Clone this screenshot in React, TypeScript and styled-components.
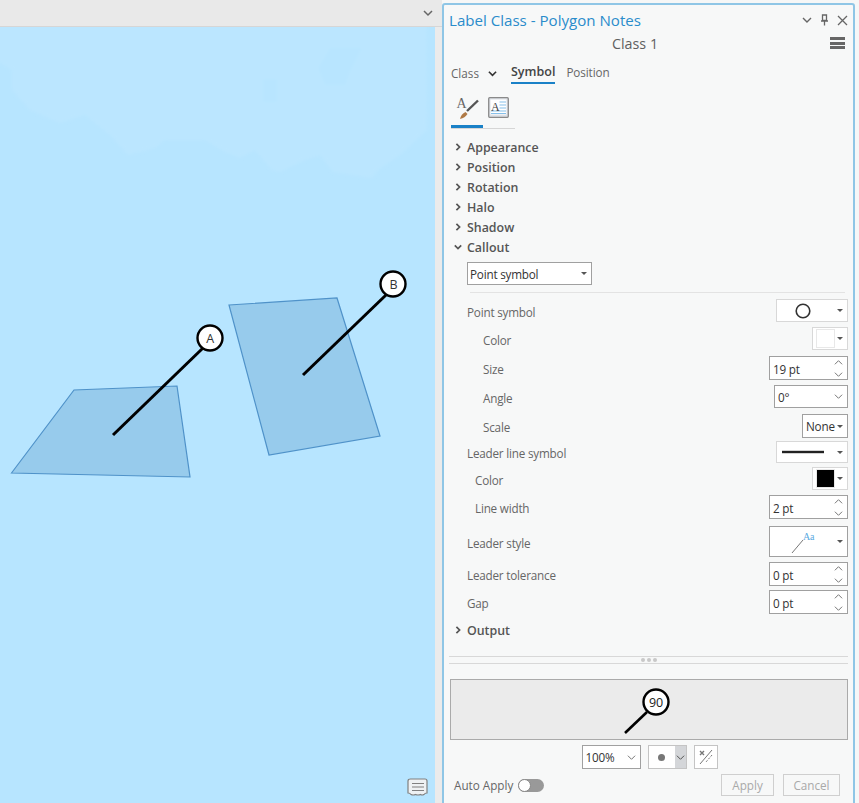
import React from "react";
import styled, { createGlobalStyle } from "styled-components";

const GlobalStyle = createGlobalStyle`
	html, body {
		margin: 0;
		padding: 0;
		height: 100%;
		background: #f6f7f7;
	}
	body {
		font-family: "Open Sans", "Noto Sans", sans-serif;
		font-size: 11.7px;
		letter-spacing: -0.2px;
		color: #555;
		overflow: hidden;
	}
`;

const Page = styled.div`
	display: flex;
	width: 859px;
	height: 803px;
	overflow: hidden;
`;

const MapColumn = styled.div`
	display: flex;
	flex-direction: column;
	width: 442px;
	flex: none;
	background: #ebebeb;
	padding-right: 7px;
	box-sizing: border-box;
`;

const TopBar = styled.div`
	display: flex;
	align-items: center;
	justify-content: flex-end;
	height: 27px;
	flex: none;
	margin-right: -7px;
	padding-right: 9px;
	padding-bottom: 2px;
	box-sizing: border-box;
	background: #e9e9e9;
	box-shadow: inset 0 -2px 0 -1px #d6d6d6;
	color: #666;
`;

const MapView = styled.div`
	position: relative;
	flex: 1;
	background: #b7e5ff;
	overflow: hidden;
`;

const MapDrawing = styled.svg`
	display: block;
	width: 100%;
	height: 100%;
`;

const MapNote = styled.svg`
	position: absolute;
	right: 7px;
	bottom: 7px;
`;

const Panel = styled.div`
	width: 413px;
	height: 820px;
	flex: none;
	margin-top: 3px;
	padding: 0 5px;
	box-sizing: border-box;
	background: #f7f8f8;
	border: 2px solid #8fc6e6;
	border-radius: 3px 3px 0 0;
`;

const TitleRow = styled.div`
	display: flex;
	align-items: center;
	justify-content: space-between;
	height: 32px;
	padding-bottom: 2px;
	box-sizing: border-box;
`;

const Title = styled.div`
	font-size: 15.1px;
	letter-spacing: 0;
	color: #2a8ccb;
`;

const WindowButtons = styled.div`
	display: flex;
	align-items: center;
	gap: 8px;
	color: #666;
`;

const SubRow = styled.div`
	display: flex;
	align-items: center;
	justify-content: space-between;
	height: 14px;
	padding-left: 163px;
	padding-right: 3px;
`;

const ClassName = styled.div`
	font-size: 14.3px;
	letter-spacing: 0;
	margin-top: -2px;
	color: #5f5f5f;
`;

const Hamburger = styled.div`
	width: 15px;
	height: 12px;
	margin-top: -2px;
	background: repeating-linear-gradient(to bottom, #666 0 3px, transparent 3px 4.5px);
`;

const Tabs = styled.div`
	display: flex;
	align-items: flex-start;
	height: 22px;
	margin-top: 11px;
	padding-left: 2px;
`;

const Tab = styled.div<{ $active?: boolean }>`
	height: 22px;
	box-sizing: border-box;
	line-height: 20px;
	margin-right: 11px;
	font-size: ${(p) => (p.$active ? "12.5px" : "11.7px")};
	font-weight: ${(p) => (p.$active ? 600 : 400)};
	letter-spacing: ${(p) => (p.$active ? "0" : "-0.1px")};
	color: ${(p) => (p.$active ? "#444" : "#666")};
	border-bottom: ${(p) => (p.$active ? "2px solid #1a81c7" : "none")};
`;

const ClassTab = styled(Tab)`
	display: flex;
	align-items: center;
	gap: 9px;
	width: 60px;
	margin-right: 0;
	letter-spacing: 0;
	color: #333;
	span {
		color: #666;
	}
`;

const SymbolTabs = styled.div`
	display: flex;
	align-items: center;
	gap: 7px;
	height: 26px;
	margin-top: 10px;
	padding-left: 6px;
`;

const SymbolTabLine = styled.div`
	width: 64px;
	height: 1px;
	margin: 5px 0 0 2px;
	border-bottom: 1px solid #d6d6d6;
	padding-top: 2px;
	background: linear-gradient(to right, #1a81c7 50%, transparent 50%);
`;

const Sections = styled.div`
	margin-top: 8px;
`;

const SectionRow = styled.div`
	display: flex;
	align-items: center;
	height: 20px;
	padding-left: 5px;
	font-weight: 600;
	font-size: 12.4px;
	letter-spacing: 0;
	color: #555;
	svg {
		width: 8px;
		margin-right: 5px;
		flex: none;
	}
`;

const Box = styled.div<{ $w: number; $h?: number; $ridge?: boolean }>`
	display: flex;
	align-items: center;
	justify-content: space-between;
	width: ${(p) => p.$w}px;
	height: ${(p) => p.$h ?? 24}px;
	flex: none;
	box-sizing: border-box;
	padding: 0 4px 0 3px;
	background: #fff;
	color: #333;
	border: 1px solid ${(p) => (p.$ridge ? "#d8d8d8" : "#a0a0a0")};
`;

const CalloutSelect = styled(Box)`
	margin: 5px 0 0 18px;
	padding-left: 2px;
	padding-right: 4px;
`;

const Divider = styled.div`
	height: 1px;
	margin: 7px 3px 0 21px;
	background: #e3e3e3;
`;

const FieldRow = styled.div<{ $top: number; $h: number; $indent: number }>`
	display: flex;
	align-items: center;
	justify-content: space-between;
	height: ${(p) => p.$h}px;
	margin-top: ${(p) => p.$top}px;
	padding-left: ${(p) => p.$indent}px;
	color: #666;
`;

const FieldLabel = styled.span<{ $h: number }>`
	padding-top: ${(p) => (p.$h % 2 ? 3 : 1)}px;
`;

const Value = styled.span`
	padding-top: 1px;
`;

const Caret = styled.i`
	display: block;
	width: 0;
	height: 0;
	flex: none;
	margin-left: auto;
	border-left: 3px solid transparent;
	border-right: 3px solid transparent;
	border-top: 3px solid #555;
`;

const Glyph = styled.span<{ $left: number }>`
	display: flex;
	margin-left: ${(p) => p.$left}px;
`;

const Spinner = styled.div`
	display: flex;
	flex-direction: column;
	gap: 3px;
	color: #777;
`;

const ThinArrow = styled.span`
	display: flex;
	color: #777;
`;

const Swatch = styled.div<{ $color: string }>`
	width: 17px;
	height: 17px;
	background: ${(p) => p.$color};
	border: 1px solid #e8e8e8;
`;

const OutputRow = styled(SectionRow)`
	margin-top: 6px;
`;

const Splitter = styled.div`
	display: flex;
	align-items: center;
	justify-content: center;
	gap: 2px;
	height: 8px;
	box-sizing: border-box;
	margin-top: 16px;
	border-top: 1.5px solid #d8d8d8;
	border-bottom: 1.5px solid #d8d8d8;
`;

const SplitDot = styled.div`
	width: 4px;
	height: 4px;
	border-radius: 50%;
	background: #c8c8c8;
`;

const Preview = styled.div`
	display: flex;
	justify-content: center;
	height: 61px;
	margin: 15px 0 0 1px;
	box-sizing: border-box;
	background: #ebebeb;
	border: 1px solid #aaa;
`;

const PreviewControls = styled.div`
	display: flex;
	align-items: center;
	justify-content: center;
	gap: 7px;
	height: 24px;
	margin-top: 5px;
	padding-left: 2px;
`;

const SplitBox = styled.div`
	display: flex;
	width: 39px;
	height: 24px;
	box-sizing: border-box;
	background: #fff;
	border: 1px solid #c4c4c4;
`;

const SplitDotArea = styled.div`
	flex: 1;
	display: flex;
	align-items: center;
	justify-content: center;
`;

const SplitArrow = styled.div`
	width: 11px;
	display: flex;
	align-items: center;
	justify-content: center;
	background: #d4d6d9;
	color: #555;
`;

const GrayDot = styled.div`
	width: 7px;
	height: 7px;
	border-radius: 50%;
	background: #777;
`;

const IconButton = styled.div`
	display: flex;
	align-items: center;
	justify-content: center;
	width: 24px;
	height: 24px;
	box-sizing: border-box;
	background: #fff;
	border: 1px solid #c4c4c4;
`;

const Footer = styled.div`
	display: flex;
	align-items: center;
	height: 22px;
	margin-top: 5px;
	padding-left: 5px;
	letter-spacing: 0;
	color: #666;
`;

const Toggle = styled.div`
	display: flex;
	align-items: center;
	width: 26px;
	height: 13px;
	margin-left: 5px;
	border-radius: 7px;
	background: #999;
`;

const ToggleKnob = styled.div`
	width: 13px;
	height: 13px;
	box-sizing: border-box;
	border-radius: 50%;
	background: #fff;
	border: 1px solid #888;
`;

const FooterButton = styled.div<{ $w: number; $first?: boolean }>`
	display: flex;
	align-items: center;
	justify-content: center;
	width: ${(p) => p.$w}px;
	height: 22px;
	box-sizing: border-box;
	margin-left: ${(p) => (p.$first ? "auto" : "9px")};
	border: 1px solid #cfcfcf;
	color: #a9a9a9;
`;

const FooterEnd = styled.div`
	width: 8px;
	flex: none;
`;

const Chevron: React.FC<{ dir: "up" | "down" | "right"; size?: number; weight?: number }> = ({
	dir,
	size = 9,
	weight = 1.3,
}) => {
	const d = { up: "M1 7 L5 3 L9 7", down: "M1 3 L5 7 L9 3", right: "M3 1 L7 5 L3 9" }[dir];
	return (
		<svg width={size} height={size} viewBox='0 0 10 10' fill='none' stroke='currentColor' strokeWidth={weight * (10 / size)}>
			<path d={d} />
		</svg>
	);
};

const SpinArrows = () => (
	<Spinner>
		<Chevron dir='up' size={9} weight={1} />
		<Chevron dir='down' size={9} weight={1} />
	</Spinner>
);

const DropArrow = () => (
	<ThinArrow>
		<Chevron dir='down' size={9} weight={1} />
	</ThinArrow>
);

const LeaderIcon = () => (
	<svg width='26' height='26' viewBox='0 0 26 26' fill='none'>
		<path d='M2 24 L13 11' stroke='#777' strokeWidth='1' />
		<text x='13' y='11' fontFamily='Liberation Serif' fontSize='10' fill='#5aa9df'>
			Aa
		</text>
	</svg>
);

type Field = {
	label: string;
	top: number;
	h: number;
	indent: number;
	w: number;
	content: React.ReactNode;
	ridge?: boolean;
};

const spin = (value: string) => (
	<>
		<Value>{value}</Value>
		<SpinArrows />
	</>
);

const fields: Field[] = [
	{
		label: "Point symbol",
		top: 6,
		h: 23,
		indent: 18,
		w: 72,
		ridge: true,
		content: (
			<>
				<Glyph $left={15}>
					<svg width='16' height='16' viewBox='0 0 16 16'>
						<circle cx='8' cy='8' r='6.8' fill='none' stroke='#333' strokeWidth='1.6' />
					</svg>
				</Glyph>
				<Caret />
			</>
		),
	},
	{
		label: "Color",
		top: 5,
		h: 23,
		indent: 34,
		w: 36,
		ridge: true,
		content: (
			<>
				<Swatch $color='#fff' />
				<Caret />
			</>
		),
	},
	{ label: "Size", top: 6, h: 24, indent: 34, w: 79, content: spin("19 pt") },
	{
		label: "Angle",
		top: 5,
		h: 23,
		indent: 34,
		w: 74,
		content: (
			<>
				0°
				<DropArrow />
			</>
		),
	},
	{
		label: "Scale",
		top: 6,
		h: 24,
		indent: 34,
		w: 46,
		content: (
			<>
				None
				<Caret />
			</>
		),
	},
	{
		label: "Leader line symbol",
		top: 3,
		h: 22,
		indent: 18,
		w: 72,
		ridge: true,
		content: (
			<>
				<Glyph $left={2}>
					<svg width='42' height='4' viewBox='0 0 42 4'>
						<rect y='0.8' width='42' height='2.4' fill='#222' />
					</svg>
				</Glyph>
				<Caret />
			</>
		),
	},
	{
		label: "Color",
		top: 4,
		h: 23,
		indent: 26,
		w: 36,
		ridge: true,
		content: (
			<>
				<Swatch $color='#000' />
				<Caret />
			</>
		),
	},
	{ label: "Line width", top: 5, h: 24, indent: 26, w: 79, content: spin("2 pt") },
	{
		label: "Leader style",
		top: 7,
		h: 31,
		indent: 18,
		w: 79,
		content: (
			<>
				<Glyph $left={17}>
					<LeaderIcon />
				</Glyph>
				<Caret />
			</>
		),
	},
	{ label: "Leader tolerance", top: 5, h: 24, indent: 18, w: 79, content: spin("0 pt") },
	{ label: "Gap", top: 4, h: 24, indent: 18, w: 79, content: spin("0 pt") },
];

const sections = ["Appearance", "Position", "Rotation", "Halo", "Shadow"];

const App: React.FC = () => {
	return (
		<Page>
			<GlobalStyle />
			<MapColumn>
				<TopBar>
					<Chevron dir='down' size={10} weight={1.5} />
				</TopBar>
				<MapView>
					<MapDrawing viewBox='0 27 435 776'>
						<defs>
							<filter id='haze'>
								<feGaussianBlur stdDeviation='1.5' />
							</filter>
						</defs>
						{/* faint haze on the water */}
						<g filter='url(#haze)'>
							<path
								d='M-5 22 H426 L427 130 L400 155 L378 170 L372 178 L333 172 L320 155 L305 160 L280 172 L272 170 L255 150 L240 158 L225 152 L205 140 L165 140 L155 148 L128 155 L110 135 L85 115 L60 123 L30 110 L12 90 L12 70 L-5 60 Z'
								fill='#bbe6ff'
							/>
							<path d='M330 48 H362 L350 72 L345 85 H325 L318 68 Z' fill='#b8e5ff' />
							<path d='M263 79 H277 V102 H263 Z' fill='#b8e5ff' />
						</g>
						<g fill='#97cbec' stroke='#4f92c9' strokeWidth='1.2'>
							<polygon points='11.5,473 74,390 177,386 190,477' />
							<polygon points='229,305 337,298 380,436 269,455' />
						</g>
						<g stroke='#000' strokeWidth='3'>
							<line x1='113' y1='435' x2='203' y2='348' />
							<line x1='303' y1='375' x2='386' y2='295' />
						</g>
						<g fill='#fff' stroke='#000' strokeWidth='2.4'>
							<circle cx='210' cy='338' r='12.5' />
							<circle cx='393' cy='284' r='12.5' />
						</g>
						<g fontFamily='Open Sans' fontSize='12.5' fill='#333' textAnchor='middle'>
							<text x='210' y='342.5'>A</text>
							<text x='393.5' y='288.5'>B</text>
						</g>
					</MapDrawing>
					<MapNote width='21' height='18' viewBox='0 0 21 18' fill='#eef1f3' stroke='#808080' strokeWidth='1.2'>
						<path d='M3.5 1 H18 Q20 1 20 3 V15 Q18 15 17 16.5 Q15 17.5 13.5 16.5 Q11 17.5 8.5 16.5 Q6 17.5 4 16.5 Q3 15 1 15 V3 Q1 1 3.5 1 Z' />
						<path d='M5 5.5 H17 M5 9 H17 M5 12.5 H17' fill='none' />
					</MapNote>
				</MapView>
			</MapColumn>
			<Panel>
				<TitleRow>
					<Title>Label Class - Polygon Notes</Title>
					<WindowButtons>
						<Chevron dir='down' size={10} weight={1.4} />
						<svg width='9' height='12' viewBox='0 0 9 12' fill='none' stroke='#666' strokeWidth='1.3'>
							<path d='M2.5 1 H6.5 V6.5 H2.5 Z M1 7 H8 M4.5 7 V11.5' />
						</svg>
						<svg width='11' height='11' viewBox='0 0 11 11' fill='none' stroke='#666' strokeWidth='1.3'>
							<path d='M1 1 L10 10 M10 1 L1 10' />
						</svg>
					</WindowButtons>
				</TitleRow>
				<SubRow>
					<ClassName>Class 1</ClassName>
					<Hamburger />
				</SubRow>
				<Tabs>
					<ClassTab>
						<span>Class</span>
						<Chevron dir='down' size={9} weight={1.6} />
					</ClassTab>
					<Tab $active>Symbol</Tab>
					<Tab>Position</Tab>
				</Tabs>
				<SymbolTabs>
					<svg width='26' height='26' viewBox='0 0 26 26' fill='none'>
						<text x='1.5' y='14' fontFamily='Liberation Serif' fontSize='14' fill='#666'>
							A
						</text>
						<path d='M12 17 L23 6.5' stroke='#555' strokeWidth='2.4' />
						<path d='M5 25 Q6 20 10.5 18 L12.5 20 Q10 24 5 25 Z' fill='#b07a45' />
					</svg>
					<svg width='21' height='21' viewBox='0 0 21 21' fill='none'>
						<rect x='0.7' y='0.7' width='19.6' height='19.6' rx='1' fill='#dde1e6' stroke='#8a8a8a' strokeWidth='1.3' />
						<rect x='2.5' y='2.5' width='16' height='15' fill='#fff' />
						<path d='M11.5 5 H18 M11.5 8 H18 M11.5 11 H18 M3 14 H18 M3 16.5 H18' stroke='#86c0ea' strokeWidth='1.1' />
						<text x='3' y='14' fontFamily='Liberation Serif' fontSize='12' fill='#444'>
							A
						</text>
					</svg>
				</SymbolTabs>
				<SymbolTabLine />
				<Sections>
					{sections.map((s) => (
						<SectionRow key={s}>
							<Chevron dir='right' size={8} weight={1.7} />
							{s}
						</SectionRow>
					))}
					<SectionRow>
						<Chevron dir='down' size={8} weight={1.7} />
						Callout
					</SectionRow>
				</Sections>
				<CalloutSelect $w={125} $h={23}>
					Point symbol
					<Caret />
				</CalloutSelect>
				<Divider />
				{fields.map((f, i) => (
					<FieldRow key={i} $top={f.top} $h={f.h} $indent={f.indent}>
						<FieldLabel $h={f.h}>{f.label}</FieldLabel>
						<Box $w={f.w} $h={f.h} $ridge={f.ridge}>
							{f.content}
						</Box>
					</FieldRow>
				))}
				<OutputRow>
					<Chevron dir='right' size={8} weight={1.7} />
					Output
				</OutputRow>
				<Splitter>
					<SplitDot />
					<SplitDot />
					<SplitDot />
				</Splitter>
				<Preview>
					<svg width='80' height='59' viewBox='-4 -1 80 59'>
						<line x1='12' y1='52' x2='34' y2='31' stroke='#000' strokeWidth='2.6' />
						<circle cx='43' cy='21' r='12.5' fill='#fff' stroke='#000' strokeWidth='2.4' />
						<text x='43' y='25.5' fontFamily='Open Sans' fontSize='12.5' fill='#222' textAnchor='middle'>
							90
						</text>
					</svg>
				</Preview>
				<PreviewControls>
					<Box $w={59}>
						100%
						<DropArrow />
					</Box>
					<SplitBox>
						<SplitDotArea>
							<GrayDot />
						</SplitDotArea>
						<SplitArrow>
							<Chevron dir='down' size={9} weight={1} />
						</SplitArrow>
					</SplitBox>
					<IconButton>
						<svg width='16' height='16' viewBox='0 0 16 16' fill='none' stroke='#777' strokeWidth='1'>
							<path d='M2 2 L6 6 M6 2 L2 6' strokeWidth='1.4' />
							<path d='M14 1 L2 15' />
							<path d='M14 6 L8 13' strokeDasharray='2 1.5' />
						</svg>
					</IconButton>
				</PreviewControls>
				<Footer>
					Auto Apply
					<Toggle>
						<ToggleKnob />
					</Toggle>
					<FooterButton $w={53} $first>
						Apply
					</FooterButton>
					<FooterButton $w={57}>Cancel</FooterButton>
					<FooterEnd />
				</Footer>
			</Panel>
		</Page>
	);
};

export default App;
